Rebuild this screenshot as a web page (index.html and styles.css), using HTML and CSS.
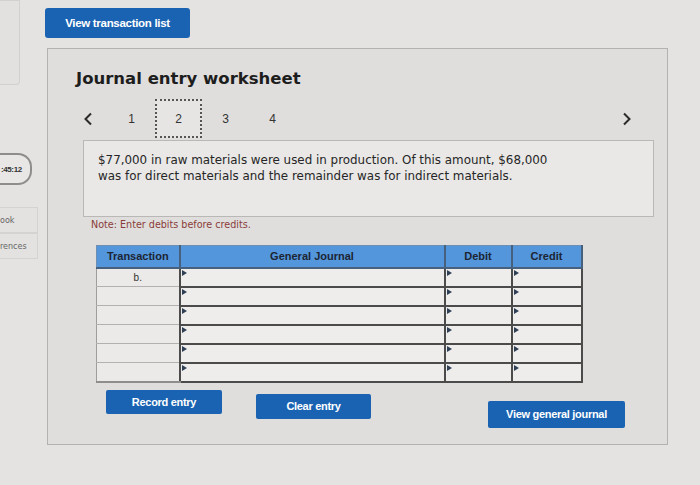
FILE: index.html
```html
<!DOCTYPE html>
<html lang="en">
<head>
<meta charset="utf-8">
<title>Journal entry worksheet</title>
<link rel="stylesheet" href="styles.css">
</head>
<body>
<div class="page">
  <aside class="side">
    <div class="side-top"></div>
    <div class="timer">:45:12</div>
    <div class="side-link first">ook</div>
    <div class="side-link">rences</div>
  </aside>
  <main class="main">
    <button class="btn btn-top">View transaction list</button>
    <section class="panel">
      <h1 class="title">Journal entry worksheet</h1>
      <nav class="pager">
        <span class="chev chev-left"><svg width="10" height="14" viewBox="0 0 10 14"><polyline points="8,1.5 2.5,7 8,12.5" fill="none" stroke="#2a2a2a" stroke-width="2"/></svg></span>
        <span class="pg">1</span>
        <span class="pg current">2</span>
        <span class="pg">3</span>
        <span class="pg">4</span>
        <span class="spacer"></span>
        <span class="chev chev-right"><svg width="10" height="14" viewBox="0 0 10 14"><polyline points="2,1.5 7.5,7 2,12.5" fill="none" stroke="#2a2a2a" stroke-width="2"/></svg></span>
      </nav>
      <div class="desc">
        <p>$77,000 in raw materials were used in production. Of this amount, $68,000 was for direct materials and the remainder was for indirect materials.</p>
      </div>
      <p class="note">Note: Enter debits before credits.</p>
      <table class="journal">
        <thead>
          <tr>
            <th class="c-tr">Transaction</th>
            <th class="c-gj">General Journal</th>
            <th class="c-dr">Debit</th>
            <th class="c-cr">Credit</th>
          </tr>
        </thead>
        <tbody>
          <tr><td class="tr">b.</td><td class="inp"></td><td class="inp"></td><td class="inp"></td></tr>
          <tr><td class="tr"></td><td class="inp"></td><td class="inp"></td><td class="inp"></td></tr>
          <tr><td class="tr"></td><td class="inp"></td><td class="inp"></td><td class="inp"></td></tr>
          <tr><td class="tr"></td><td class="inp"></td><td class="inp"></td><td class="inp"></td></tr>
          <tr><td class="tr"></td><td class="inp"></td><td class="inp"></td><td class="inp"></td></tr>
          <tr><td class="tr"></td><td class="inp"></td><td class="inp"></td><td class="inp"></td></tr>
        </tbody>
      </table>
      <div class="actions">
        <button class="btn btn-record">Record entry</button>
        <button class="btn btn-clear">Clear entry</button>
        <button class="btn btn-view">View general journal</button>
      </div>
    </section>
  </main>
</div>
</body>
</html>
```

FILE: styles.css
```css
* { box-sizing: border-box; }

html, body {
  margin: 0;
  padding: 0;
}

body {
  width: 700px;
  height: 485px;
  overflow: hidden;
  background: #e4e3e1;
  font-family: "DejaVu Sans", Verdana, sans-serif;
  color: #222;
}

.page {
  display: flex;
  height: 485px;
}

/* left sidebar (cut off) */
.side {
  width: 45px;
  flex: none;
  display: flex;
  flex-direction: column;
}

.side-top {
  width: 20px;
  height: 85px;
  border: 1px solid #d2d1cf;
  border-left: none;
  border-radius: 0 0 4px 0;
  background: #e2e1df;
}

.timer {
  margin-top: 68px;
  width: 32px;
  height: 32px;
  border: 2px solid #8e8d8b;
  border-left: none;
  border-radius: 0 14px 14px 0;
  background: #e8e7e5;
  font-family: "Liberation Sans", Arial, sans-serif;
  font-weight: bold;
  font-size: 8px;
  letter-spacing: -0.4px;
  color: #333;
  display: flex;
  align-items: center;
  padding-left: 1px;
}

.side-link {
  width: 38px;
  height: 26px;
  border: 1px solid #d4d3d1;
  border-left: none;
  background: #e3e2e0;
  font-size: 8px;
  color: #666;
  display: flex;
  align-items: center;
}

.side-link.first {
  margin-top: 22px;
}

/* main column */
.main {
  flex: none;
  width: 625px;
  padding-top: 8px;
}

.btn {
  border: none;
  border-radius: 2px;
  background: #1a63b2;
  color: #fff;
  font-family: "Liberation Sans", Arial, sans-serif;
  font-weight: bold;
  font-size: 11px;
  letter-spacing: -0.3px;
  padding: 0;
  cursor: pointer;
}

.btn-top {
  display: block;
  width: 145px;
  height: 30px;
  font-size: 11.5px;
  margin-left: 0;
  border-radius: 3px;
}

.panel {
  margin-top: 10px;
  margin-left: 2px;
  width: 621px;
  height: 397px;
  border: 1.5px solid #b3b2b0;
  background: #dfdedc;
  padding: 19px 14px 0 28px;
}

.title {
  margin: 0;
  font-size: 16.5px;
  line-height: 22px;
  font-weight: bold;
  color: #1d1d1d;
}

.pager {
  margin-top: 9px;
  display: flex;
  align-items: center;
  height: 39px;
  padding-left: 7px;
}

.chev {
  display: flex;
  align-items: center;
}

.chev-left {
  margin-right: 15px;
}

.pg {
  width: 47px;
  height: 39px;
  display: flex;
  align-items: center;
  justify-content: center;
  font-family: "Liberation Sans", Arial, sans-serif;
  font-size: 12px;
  color: #333;
}

.pg.current {
  border: 2px dotted #555;
  background: #e6e5e3;
}

.spacer {
  flex: 1;
}

.chev-right {
  margin-right: 21px;
}

.desc {
  margin-top: 2px;
  margin-left: 7px;
  width: 571px;
  height: 77px;
  border: 1px solid #b9b8b6;
  background: #e9e8e6;
  padding: 11px 14px 0 14px;
}

.desc p {
  margin: 0;
  width: 462px;
  font-size: 11.9px;
  line-height: 16px;
  color: #262626;
}

.note {
  margin: 2px 0 0 15px;
  font-size: 9.6px;
  line-height: 12px;
  color: #8a3c3a;
}

.journal {
  margin-top: 14px;
  margin-left: 20px;
  width: 485px;
  border-collapse: collapse;
  table-layout: fixed;
  font-family: "Liberation Sans", Arial, sans-serif;
}

.journal th {
  height: 22px;
  background: #5396dc;
  color: #1c2533;
  font-size: 11px;
  font-weight: bold;
  text-align: center;
  border: 2px solid #46607e;
  border-top: 1px solid #6d8fb3;
  padding: 0;
}

.journal th.c-tr { width: 83px; border-left: 1px solid #6d8fb3; }
.journal th.c-gj { width: 265px; }
.journal th.c-dr { width: 67px; }
.journal th.c-cr { width: 70px; }

.journal td {
  height: 19px;
  padding: 0;
  position: relative;
}

.journal td.tr {
  background: #ebeae8;
  border-bottom: 1px solid #b2b1af;
  border-left: 1px solid #9e9d9b;
  font-size: 10px;
  color: #333;
  text-align: center;
  vertical-align: top;
  padding-top: 3px;
}

.journal td.inp {
  background: #eeedeb;
  border: 2px solid #4b4b4b;
}

.journal td.inp::before {
  content: "";
  position: absolute;
  left: 1px;
  top: 1px;
  border-left: 5px solid #2f3f55;
  border-top: 3px solid transparent;
  border-bottom: 3px solid transparent;
}

.journal tbody tr:last-child td.tr {
  border-bottom: 2px solid #8f8e8c;
}

.actions {
  display: flex;
  align-items: flex-start;
  margin-top: 7px;
  padding-left: 30px;
}

.btn-record {
  width: 116px;
  height: 24px;
}

.btn-clear {
  width: 115px;
  height: 25px;
  margin-left: 34px;
  margin-top: 4px;
}

.btn-view {
  width: 137px;
  height: 27px;
  margin-left: 117px;
  margin-top: 11px;
}
```
